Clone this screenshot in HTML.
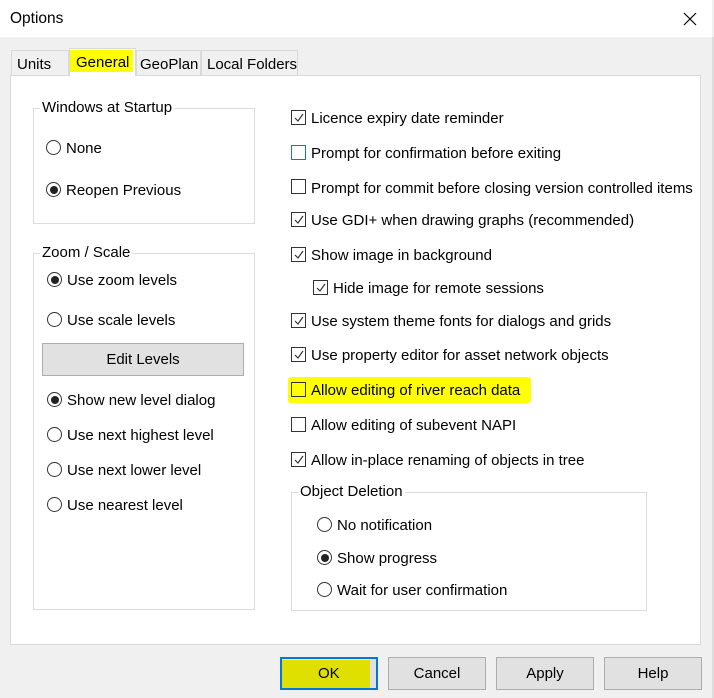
<!DOCTYPE html>
<html><head><meta charset="utf-8"><style>
*{margin:0;padding:0;box-sizing:border-box}
body{width:714px;height:698px;background:#f0f0f0;font-family:"Liberation Sans",sans-serif;font-size:15px;color:#000;position:relative;overflow:hidden}
.a{position:absolute;white-space:nowrap}
.cb{position:absolute;width:15px;height:15px;border:1px solid #333;background:#fff}
.cb svg{position:absolute;left:1px;top:1px}
.rb{position:absolute;width:15px;height:15px;border:1px solid #333;border-radius:50%;background:#fff}
.rb.on::after{content:"";position:absolute;left:2.5px;top:2.5px;width:8px;height:8px;border-radius:50%;background:#222}
.grp{position:absolute;border:1px solid #dcdcdc}
.gt{position:absolute;background:#fff;padding:0 2px;top:-10px;left:6px}
.btn{position:absolute;background:#e1e1e1;border:1px solid #adadad;text-align:center;line-height:31px}
.hl{position:absolute;background:#ffff00}
</style></head><body>
<div class="a" style="left:0;top:0;width:712px;height:37px;background:#fff"></div>
<div class="a" style="left:10px;top:10px;font-size:15.5px">Options</div>
<svg class="a" style="left:683px;top:12px" width="14" height="14"><path d="M1 1L13 13M13 1L1 13" stroke="#000" stroke-width="1.2"/></svg>
<div class="a" style="left:712px;top:37px;width:2px;height:661px;background:#ddd"></div>

<div class="a" style="left:11px;top:50px;width:58px;height:25px;border:1px solid #d9d9d9;border-bottom:none;background:#f0f0f0"></div>
<div class="a" style="left:17px;top:56px">Units</div>
<div class="a" style="left:69px;top:48px;width:67px;height:28px;border:1px solid #d9d9d9;border-bottom:none;background:#fff"></div>
<div class="hl" style="left:70px;top:50px;width:63px;height:22px"></div>
<div class="a" style="left:76px;top:54px">General</div>
<div class="a" style="left:136px;top:50px;width:65px;height:25px;border:1px solid #d9d9d9;border-bottom:none;background:#f0f0f0"></div>
<div class="a" style="left:140px;top:56px">GeoPlan</div>
<div class="a" style="left:201px;top:50px;width:97px;height:25px;border:1px solid #d9d9d9;border-bottom:none;background:#f0f0f0"></div>
<div class="a" style="left:207px;top:56px">Local Folders</div>
<div class="a" style="left:10px;top:75px;width:691px;height:570px;background:#fff;border:1px solid #d9d9d9"></div>
<div class="a" style="left:70px;top:74px;width:65px;height:3px;background:#fff"></div>

<div class="grp" style="left:33px;top:108px;width:222px;height:116px"><div class="gt">Windows at Startup</div></div>
<div class="rb" style="left:46px;top:140px"></div><div class="a" style="left:66px;top:140px">None</div>
<div class="rb on" style="left:46px;top:182px"></div><div class="a" style="left:66px;top:182px">Reopen Previous</div>

<div class="grp" style="left:33px;top:253px;width:222px;height:357px"><div class="gt">Zoom / Scale</div></div>
<div class="rb on" style="left:47px;top:272px"></div><div class="a" style="left:67px;top:272px">Use zoom levels</div>
<div class="rb" style="left:47px;top:312px"></div><div class="a" style="left:67px;top:312px">Use scale levels</div>
<div class="btn" style="left:42px;top:343px;width:202px;height:33px">Edit Levels</div>
<div class="rb on" style="left:47px;top:392px"></div><div class="a" style="left:67px;top:392px">Show new level dialog</div>
<div class="rb" style="left:47px;top:427px"></div><div class="a" style="left:67px;top:427px">Use next highest level</div>
<div class="rb" style="left:47px;top:462px"></div><div class="a" style="left:67px;top:462px">Use next lower level</div>
<div class="rb" style="left:47px;top:497px"></div><div class="a" style="left:67px;top:497px">Use nearest level</div>

<div class="hl" style="left:288px;top:377px;width:243px;height:26px;border-radius:3px"></div>
<div class="cb" style="left:291px;top:110px"><svg width="12" height="12"><path d="M2 6L5 9L10 2" stroke="#333" fill="none" stroke-width="1.2"/></svg></div><div class="a" style="left:311px;top:110px">Licence expiry date reminder</div>
<div class="cb" style="left:291px;top:145px;border-color:#1a73d0"></div><div class="a" style="left:311px;top:145px">Prompt for confirmation before exiting</div>
<div class="cb" style="left:291px;top:179px"></div><div class="a" style="left:311px;top:180px">Prompt for commit before closing version controlled items</div>
<div class="cb" style="left:291px;top:212px"><svg width="12" height="12"><path d="M2 6L5 9L10 2" stroke="#333" fill="none" stroke-width="1.2"/></svg></div><div class="a" style="left:311px;top:212px">Use GDI+ when drawing graphs (recommended)</div>
<div class="cb" style="left:291px;top:247px"><svg width="12" height="12"><path d="M2 6L5 9L10 2" stroke="#333" fill="none" stroke-width="1.2"/></svg></div><div class="a" style="left:311px;top:247px">Show image in background</div>
<div class="cb" style="left:313px;top:280px"><svg width="12" height="12"><path d="M2 6L5 9L10 2" stroke="#333" fill="none" stroke-width="1.2"/></svg></div><div class="a" style="left:333px;top:280px">Hide image for remote sessions</div>
<div class="cb" style="left:291px;top:313px"><svg width="12" height="12"><path d="M2 6L5 9L10 2" stroke="#333" fill="none" stroke-width="1.2"/></svg></div><div class="a" style="left:311px;top:313px">Use system theme fonts for dialogs and grids</div>
<div class="cb" style="left:291px;top:347px"><svg width="12" height="12"><path d="M2 6L5 9L10 2" stroke="#333" fill="none" stroke-width="1.2"/></svg></div><div class="a" style="left:311px;top:347px">Use property editor for asset network objects</div>
<div class="cb" style="left:291px;top:382px;background:transparent"></div><div class="a" style="left:311px;top:382px">Allow editing of river reach data</div>
<div class="cb" style="left:291px;top:417px"></div><div class="a" style="left:311px;top:417px">Allow editing of subevent NAPI</div>
<div class="cb" style="left:291px;top:452px"><svg width="12" height="12"><path d="M2 6L5 9L10 2" stroke="#333" fill="none" stroke-width="1.2"/></svg></div><div class="a" style="left:311px;top:452px">Allow in-place renaming of objects in tree</div>

<div class="grp" style="left:291px;top:492px;width:356px;height:119px"><div class="gt">Object Deletion</div></div>
<div class="rb" style="left:317px;top:517px"></div><div class="a" style="left:337px;top:517px">No notification</div>
<div class="rb on" style="left:317px;top:550px"></div><div class="a" style="left:337px;top:550px">Show progress</div>
<div class="rb" style="left:317px;top:582px"></div><div class="a" style="left:337px;top:582px">Wait for user confirmation</div>

<div class="btn" style="left:280px;top:657px;width:98px;height:33px;border:2px solid #0078d7"></div>
<div class="a" style="left:282px;top:660px;width:88px;height:28px;background:#e0e000"></div>
<div class="a" style="left:318px;top:665px">OK</div>
<div class="btn" style="left:388px;top:657px;width:98px;height:33px">Cancel</div>
<div class="btn" style="left:496px;top:657px;width:98px;height:33px">Apply</div>
<div class="btn" style="left:604px;top:657px;width:98px;height:33px">Help</div>
</body></html>
